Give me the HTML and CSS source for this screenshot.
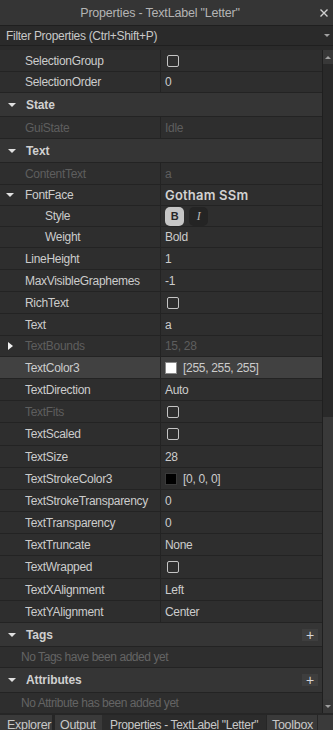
FILE: index.html
```html
<!DOCTYPE html>
<html lang="en">
<head>
<meta charset="UTF-8">
<title>Properties</title>
<link rel="stylesheet" href="styles.css">
</head>
<body>
<div class="panel">
  <div class="titlebar">
    <span class="title">Properties - TextLabel "Letter"</span>
    <span class="close">
      <svg width="8" height="8" viewBox="0 0 8 8"><path d="M0.5 0.5L7.5 7.5M7.5 0.5L0.5 7.5" stroke="#d0d0d0" stroke-width="1.4"/></svg>
    </span>
  </div>
  <div class="filter">
    <span>Filter Properties (Ctrl+Shift+P)</span>
    <span class="caret-down small"></span>
  </div>
  <div class="spacer"></div>

  <div class="body">
    <div class="list">
      <div class="row"><div class="name"><span class="lbl">SelectionGroup</span></div><div class="value"><span class="check"></span></div></div>
      <div class="row s"><div class="name"><span class="lbl">SelectionOrder</span></div><div class="value">0</div></div>

      <div class="group"><span class="tri-down"></span><span class="lbl">State</span></div>
      <div class="row dim"><div class="name"><span class="lbl">GuiState</span></div><div class="value">Idle</div></div>

      <div class="group"><span class="tri-down"></span><span class="lbl">Text</span></div>
      <div class="row"><div class="name dim"><span class="lbl">ContentText</span></div><div class="value dim">a</div></div>
      <div class="row s"><div class="name"><span class="tri-down open"></span><span class="lbl">FontFace</span></div><div class="value"><span class="gotham">Gotham SSm</span></div></div>
      <div class="row s"><div class="name sub"><span class="lbl">Style</span></div><div class="value"><span class="fmt on">B</span><span class="fmt off">I</span></div></div>
      <div class="row s"><div class="name sub"><span class="lbl">Weight</span></div><div class="value">Bold</div></div>
      <div class="row"><div class="name"><span class="lbl">LineHeight</span></div><div class="value">1</div></div>
      <div class="row"><div class="name"><span class="lbl">MaxVisibleGraphemes</span></div><div class="value">-1</div></div>
      <div class="row"><div class="name"><span class="lbl">RichText</span></div><div class="value"><span class="check"></span></div></div>
      <div class="row"><div class="name"><span class="lbl">Text</span></div><div class="value">a</div></div>
      <div class="row s"><div class="name dim"><span class="tri-right"></span><span class="lbl">TextBounds</span></div><div class="value dim">15, 28</div></div>

      <div class="row hl"><div class="name"><span class="lbl">TextColor3</span></div><div class="value"><span class="swatch white"></span>[255, 255, 255]</div></div>
      <div class="row"><div class="name"><span class="lbl">TextDirection</span></div><div class="value">Auto</div></div>
      <div class="row"><div class="name dim"><span class="lbl">TextFits</span></div><div class="value"><span class="check"></span></div></div>
      <div class="row t"><div class="name"><span class="lbl">TextScaled</span></div><div class="value"><span class="check"></span></div></div>
      <div class="row"><div class="name"><span class="lbl">TextSize</span></div><div class="value">28</div></div>
      <div class="row"><div class="name"><span class="lbl">TextStrokeColor3</span></div><div class="value"><span class="swatch black"></span>[0, 0, 0]</div></div>
      <div class="row"><div class="name"><span class="lbl">TextStrokeTransparency</span></div><div class="value">0</div></div>
      <div class="row"><div class="name"><span class="lbl">TextTransparency</span></div><div class="value">0</div></div>
      <div class="row"><div class="name"><span class="lbl">TextTruncate</span></div><div class="value">None</div></div>
      <div class="row t"><div class="name"><span class="lbl">TextWrapped</span></div><div class="value"><span class="check"></span></div></div>
      <div class="row"><div class="name"><span class="lbl">TextXAlignment</span></div><div class="value">Left</div></div>
      <div class="row"><div class="name"><span class="lbl">TextYAlignment</span></div><div class="value">Center</div></div>

      <div class="group"><span class="tri-down"></span><span class="lbl">Tags</span><span class="add">+</span></div>
      <div class="empty">No Tags have been added yet</div>
      <div class="group tall"><span class="tri-down"></span><span class="lbl">Attributes</span><span class="add">+</span></div>
      <div class="empty last">No Attribute has been added yet</div>
    </div>

    <div class="scrollbar">
      <div class="sb-btn"><span class="caret-up"></span></div>
      <div class="track"><div class="thumb"></div></div>
      <div class="sb-btn"><span class="caret-down"></span></div>
    </div>
  </div>

  <div class="tabs">
    <div class="tab explorer">Explorer</div>
    <div class="tab output">Output</div>
    <div class="tab active">Properties - TextLabel "Letter"</div>
    <div class="tab toolbox">Toolbox</div>
    <div class="tab more"></div>
  </div>
</div>
</body>
</html>
```

FILE: styles.css
```css
* {
  box-sizing: border-box;
}
body {
  margin: 0;
  background: #2e2e2e;
  font-family: "Liberation Sans", Arial, sans-serif;
  font-size: 12px;
  letter-spacing: -0.3px;
  color: #cccccc;
}
.panel {
  width: 333px;
  height: 730px;
  display: flex;
  flex-direction: column;
  overflow: hidden;
}

/* title + filter */
.titlebar {
  height: 25px;
  background: #353535;
  display: flex;
  align-items: center;
}
.title {
  flex: 1;
  text-align: center;
  font-size: 12.5px;
  letter-spacing: -0.2px;
  color: #b4b4b4;
}
.close {
  width: 13px;
  display: flex;
}
.filter {
  height: 21px;
  background: #2a2a2a;
  border-top: 1px solid #1f1f1f;
  border-bottom: 1px solid #1f1f1f;
  display: flex;
  align-items: center;
  padding: 0 3px 0 6px;
  color: #c8c8c8;
}
.filter span:first-child {
  flex: 1;
}
.spacer {
  height: 4px;
  background: #2a2a2a;
}

/* property list */
.body {
  flex: 1;
  display: flex;
  min-height: 0;
}
.list {
  flex: 1;
  display: flex;
  flex-direction: column;
  background: #2e2e2e;
  overflow: hidden;
}
.row {
  display: flex;
  height: 22px;
  flex: none;
  border-bottom: 1px solid #232323;
}
.row.s {
  height: 21px;
}
.row.t {
  height: 23px;
}
.row.hl {
  background: #414141;
}
.name {
  width: 161px;
  border-right: 1px solid #232323;
  display: flex;
  align-items: center;
  padding-left: 8px;
}
.name .lbl {
  margin-left: 17px;
}
.name.sub .lbl {
  margin-left: 37px;
}
.name .tri-down + .lbl,
.name .tri-right + .lbl {
  margin-left: 9px;
}
.name .tri-down.open {
  margin-left: -2px;
  margin-right: 2px;
}
.value {
  flex: 1;
  display: flex;
  align-items: center;
  padding-left: 4px;
}
.dim,
.dim .value,
.name.dim {
  color: #5e5e5e;
}

.check {
  width: 12px;
  height: 12px;
  margin-left: 2px;
  border: 1px solid #c4c4c4;
  border-radius: 2px;
}
.swatch {
  width: 12px;
  height: 12px;
  margin-right: 6px;
  border: 1px solid #8a8a8a;
}
.swatch.white {
  background: #ffffff;
}
.swatch.black {
  background: #000000;
  border-color: #3a3a3a;
}
.gotham {
  font-family: Inter, "Liberation Sans", sans-serif;
  font-weight: 600;
  font-size: 13px;
  letter-spacing: 0.2px;
  color: #d2d2d2;
}
.fmt {
  width: 19px;
  height: 19px;
  border-radius: 5px;
  display: flex;
  align-items: center;
  justify-content: center;
  margin-right: 5px;
}
.fmt.on {
  background: #c6c6c6;
  color: #262626;
  font-weight: bold;
  font-size: 11px;
}
.fmt.off {
  background: #242424;
  color: #b8b8b8;
  font-family: "Liberation Serif", serif;
  font-style: italic;
  font-size: 12px;
}

/* category headers */
.group {
  height: 24px;
  flex: none;
  background: #353535;
  border-bottom: 1px solid #232323;
  display: flex;
  align-items: center;
  padding-left: 8px;
  font-weight: bold;
  letter-spacing: -0.1px;
  color: #d0d0d0;
}
.group.tall {
  height: 25px;
}
.group .lbl {
  margin-left: 10px;
}
.add {
  margin-left: auto;
  margin-right: 4px;
  width: 16px;
  height: 12px;
  background: #3e3e3e;
  color: #d6d6d6;
  font-size: 14px;
  font-weight: normal;
  line-height: 12px;
  text-align: center;
}
.empty {
  height: 21px;
  flex: none;
  border-bottom: 1px solid #232323;
  display: flex;
  align-items: center;
  padding-left: 21px;
  letter-spacing: -0.45px;
  color: #646464;
}
.empty.last {
  height: 20px;
  border-bottom: none;
}

/* triangles */
.tri-down {
  width: 0;
  height: 0;
  border-left: 4px solid transparent;
  border-right: 4px solid transparent;
  border-top: 4px solid #e0e0e0;
}
.tri-right {
  width: 0;
  height: 0;
  border-top: 4px solid transparent;
  border-bottom: 4px solid transparent;
  border-left: 5px solid #f0f0f0;
  margin-right: 3px;
}
.caret-down,
.caret-up {
  width: 0;
  height: 0;
  border-left: 3px solid transparent;
  border-right: 3px solid transparent;
}
.caret-down {
  border-top: 3px solid #a0a0a0;
}
.caret-up {
  border-bottom: 3px solid #a0a0a0;
}

/* scrollbar */
.scrollbar {
  width: 11px;
  display: flex;
  flex-direction: column;
  background: #292929;
  border-left: 1px solid #1f1f1f;
}
.sb-btn {
  height: 14px;
  background: #383838;
  display: flex;
  align-items: center;
  justify-content: center;
}
.track {
  flex: 1;
  display: flex;
  flex-direction: column;
  justify-content: flex-end;
}
.thumb {
  height: 282px;
  background: #393939;
}

/* dock tabs */
.tabs {
  height: 17px;
  flex: none;
  background: #262626;
  display: flex;
  padding-top: 2px;
  overflow: hidden;
}
.tab {
  height: 22px;
  flex: none;
  background: #3a3a3a;
  padding: 3px 0 0 7px;
  font-size: 12.5px;
  letter-spacing: -0.3px;
  white-space: nowrap;
  overflow: hidden;
  color: #c8c8c8;
}
.tab.explorer {
  width: 52px;
  margin-right: 3px;
}
.tab.output {
  width: 47px;
  padding-left: 5px;
}
.tab.active {
  width: 164px;
  background: #2c2c2c;
  padding-left: 8px;
  font-size: 12px;
  letter-spacing: -0.35px;
}
.tab.toolbox {
  width: 50px;
  margin-left: 1px;
  padding-left: 5px;
}
.tab.more {
  width: 15px;
  margin-left: 1px;
}
```
